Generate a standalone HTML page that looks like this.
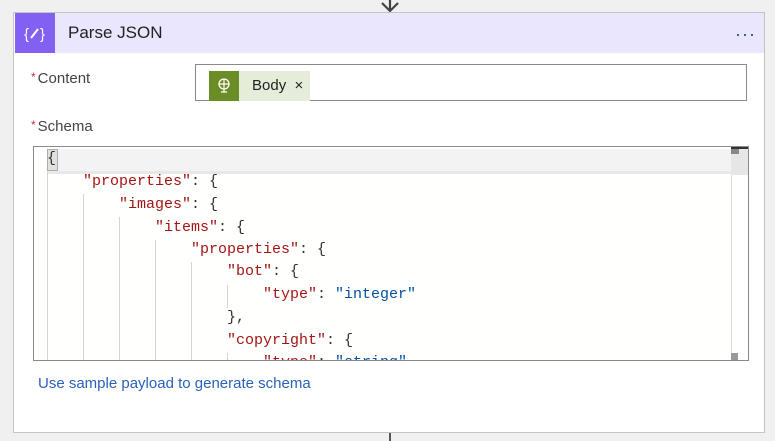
<!DOCTYPE html>
<html><head><style>
body{margin:0;width:775px;height:441px;background:#f0f0f0;position:relative;overflow:hidden;font-family:"Segoe UI","Liberation Sans",sans-serif;}
.card{position:absolute;left:13px;top:12px;width:752px;height:421px;background:#fff;border:1px solid #c4c4c4;box-sizing:border-box;}
.hdr{position:absolute;left:1px;top:0;right:0;height:40px;background:#e9e6fd;}
.ic{position:absolute;left:0;top:0;width:40px;height:40px;background:#8160f2;}
.title{position:absolute;left:53px;top:10px;font-size:17px;color:#222;line-height:20px;}
.dot{position:absolute;top:21px;width:2px;height:2px;background:#2e5fbb;}
.lbl{position:absolute;font-size:15px;color:#444;}
.lbl b{color:#d13438;font-weight:normal;font-size:12px;margin-right:2px;vertical-align:top;}
.inp{position:absolute;left:195px;top:64px;width:552px;height:37px;border:1px solid #8a8a8a;box-sizing:border-box;}
.tok{position:absolute;left:209px;top:71px;width:101px;height:30px;background:#e5ecd9;}
.tok .g{position:absolute;left:0;top:0;width:30px;height:30px;background:#6a8d26;}
.tok span{position:absolute;left:43px;top:6px;font-size:15px;color:#222;}
.code{position:absolute;left:33px;top:146px;width:716px;height:215px;border:1px solid #8a8a8a;box-sizing:border-box;overflow:hidden;background:#fffffd;}
.ln{position:absolute;left:0;font-family:"Liberation Mono",monospace;font-size:15px;white-space:pre;color:#333;line-height:20px;}
.k{color:#a31515}.s{color:#0451a5}
.gd{position:absolute;width:1px;background:#d4d4d4;}
.link{position:absolute;left:38px;top:375px;font-size:15px;color:#2a62b9;}
</style></head><body>
<svg style="position:absolute;left:378px;top:0" width="24" height="13"><path d="M12 0V11M4 3L12 11L20 3" stroke="#444" stroke-width="2.2" fill="none"/></svg>
<div style="position:absolute;left:389px;top:433px;width:2px;height:8px;background:#555"></div>
<div class="card">
 <div class="hdr">
  <div class="ic"><svg width="40" height="40"><text x="9" y="26" font-size="15" fill="#fff" font-family="Liberation Sans">{</text><text x="25" y="26" font-size="15" fill="#fff" font-family="Liberation Sans">}</text><path d="M16 25L23 16" stroke="#fff" stroke-width="2"/></svg></div>
  <div class="title">Parse JSON</div>
  <div class="dot" style="left:722px"></div><div class="dot" style="left:729px"></div><div class="dot" style="left:736px"></div>
 </div>
</div>
<div class="lbl" style="left:31px;top:70px"><b>*</b>Content</div>
<div class="lbl" style="left:31px;top:118px"><b>*</b>Schema</div>
<div class="inp"></div>
<div class="tok"><div class="g"><svg width="30" height="30"><circle cx="15" cy="13" r="5" stroke="#fff" fill="none" stroke-width="1.3"/><path d="M10 13H20M15 8V18M12 21H18M15 18V21" stroke="#fff" stroke-width="1.2"/></svg></div><span>Body&nbsp;&nbsp;<span style="position:static;font-size:15px">×</span></span></div>
<div class="code">
 <div style="position:absolute;left:13px;top:2px;width:684px;height:22px;background:#f3f3f3;border-bottom:3px solid #e8e8e8"></div>
 <div style="position:absolute;left:13px;top:2px;width:9px;height:20px;background:#dfe3dc;border:1px solid #aab"></div>
 <div style="position:absolute;left:697px;top:0;width:17px;height:213px;background:#fff;border-left:1px solid #ddd"></div>
 <div style="position:absolute;left:697px;top:0;width:17px;height:28px;background:#e6e6e6"></div>
 <div style="position:absolute;left:697px;top:0;width:17px;height:2px;background:#333"></div>
 <div style="position:absolute;left:697px;top:2px;width:8px;height:5px;background:#888"></div>
 <div style="position:absolute;left:697px;top:206px;width:7px;height:8px;background:#999"></div>
 <div class="gd" style="left:13px;top:25px;height:190px"></div>
 <div class="gd" style="left:49px;top:47px;height:168px"></div>
 <div class="gd" style="left:85px;top:70px;height:145px"></div>
 <div class="gd" style="left:121px;top:93px;height:122px"></div>
 <div class="gd" style="left:157px;top:115px;height:100px"></div>
 <div class="gd" style="left:193px;top:138px;height:23px"></div>
 <div class="gd" style="left:193px;top:206px;height:10px"></div>
 <div class="ln" style="top:2px;left:13px">{</div>
 <div class="ln" style="top:25px;left:49px"><span class="k">"properties"</span>: {</div>
 <div class="ln" style="top:48px;left:85px"><span class="k">"images"</span>: {</div>
 <div class="ln" style="top:71px;left:121px"><span class="k">"items"</span>: {</div>
 <div class="ln" style="top:93px;left:157px"><span class="k">"properties"</span>: {</div>
 <div class="ln" style="top:115px;left:193px"><span class="k">"bot"</span>: {</div>
 <div class="ln" style="top:138px;left:229px"><span class="k">"type"</span>: <span class="s">"integer"</span></div>
 <div class="ln" style="top:161px;left:193px">},</div>
 <div class="ln" style="top:184px;left:193px"><span class="k">"copyright"</span>: {</div>
 <div class="ln" style="top:206px;left:229px"><span class="k">"type"</span>: <span class="s">"string"</span></div>
</div>
<div class="link">Use sample payload to generate schema</div>
</body></html>
